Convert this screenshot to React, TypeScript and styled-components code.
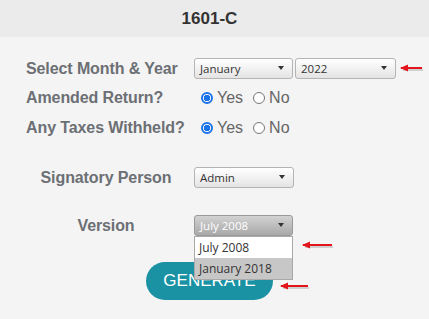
import React from "react";
import styled, { createGlobalStyle } from "styled-components";

const GlobalStyle = createGlobalStyle`
  html, body {
    margin: 0;
    padding: 0;
    background: #f4f4f4;
  }
  body {
    font-family: "Liberation Sans", Arial, sans-serif;
  }
`;

const Page = styled.div`
  width: 429px;
  height: 319px;
  overflow: hidden;
  background: #f4f4f4;
`;

const Header = styled.div`
  height: 37px;
  background: #ebebeb;
  display: flex;
  align-items: center;
  justify-content: center;
  padding-right: 10px;
  box-sizing: border-box;
`;

const Title = styled.h1`
  margin: 0;
  font-size: 17px;
  font-weight: bold;
  color: #333;
`;

const Body = styled.div`
  display: flex;
  flex-direction: column;
  padding: 17px 0 0 26px;
`;

const Row = styled.div<{ $gap?: number }>`
  display: grid;
  grid-template-columns: 168px auto;
  align-items: center;
  height: 29px;
  margin-top: ${(p) => p.$gap ?? 0}px;
`;

const Label = styled.div<{ $centered?: boolean }>`
  font-size: 16px;
  font-weight: bold;
  color: #6c6f74;
  white-space: nowrap;
  letter-spacing: -0.1px;
  text-align: ${(p) => (p.$centered ? "center" : "left")};
  padding-right: ${(p) => (p.$centered ? "8px" : "0")};
`;

const Controls = styled.div`
  display: flex;
  align-items: center;
  gap: 2px;
  position: relative;
`;

const SelectBox = styled.div<{ $width: number; $disabled?: boolean }>`
  position: relative;
  width: ${(p) => p.$width}px;
  height: 21px;
  box-sizing: border-box;
  border: 1px solid ${(p) => (p.$disabled ? "#9a9a9a" : "#b4b4b4")};
  border-radius: 3px;
  background: ${(p) =>
    p.$disabled
      ? "linear-gradient(#d2d2d2, #a9a9a9)"
      : "linear-gradient(#ffffff, #e4e4e4)"};
  color: ${(p) => (p.$disabled ? "#ffffff" : "#333")};
  font-family: "Open Sans", "Noto Sans", sans-serif;
  font-size: 11.5px;
  line-height: 19px;
  padding-left: 5px;

  &::after {
    content: "";
    position: absolute;
    right: 8px;
    top: 7px;
    border-left: 3.5px solid transparent;
    border-right: 3.5px solid transparent;
    border-top: 4px solid #333;
  }
`;

const RadioGroup = styled.div`
  display: flex;
  align-items: center;
  padding-left: 7px;
  font-size: 16px;
  color: #666;
`;

const RadioDot = styled.span<{ $checked?: boolean }>`
  width: 12px;
  height: 12px;
  box-sizing: border-box;
  border-radius: 50%;
  border: ${(p) => (p.$checked ? "2px solid #1a73e8" : "1px solid #767676")};
  background: ${(p) => (p.$checked ? "radial-gradient(circle, #1a73e8 0 3px, #fff 3.5px)" : "#fff")};
  margin-right: 4px;
`;

const RadioText = styled.span`
  margin-right: 10px;
  line-height: 1;
`;

const DropList = styled.div`
  position: absolute;
  left: 0;
  top: 21px;
  width: 99px;
  box-sizing: border-box;
  border: 1px solid #a9a9a9;
  background: #fff;
  font-family: "Open Sans", "Noto Sans", sans-serif;
  font-size: 12px;
  color: #333;
  z-index: 2;
`;

const Option = styled.div<{ $hover?: boolean }>`
  height: 21px;
  line-height: 21px;
  padding-left: 4px;
  background: ${(p) => (p.$hover ? "#c7c7c7" : "#fff")};
`;

const ArrowWrap = styled.span<{ $left: number; $top: number }>`
  position: absolute;
  left: ${(p) => p.$left}px;
  top: ${(p) => p.$top}px;
  display: block;
  line-height: 0;
`;

const ButtonRow = styled.div`
  display: flex;
  justify-content: center;
  margin-top: 22px;
  padding-right: 10px;
`;

const ButtonWrap = styled.div`
  position: relative;
`;

const GenerateButton = styled.button`
  width: 127px;
  height: 38px;
  border: none;
  border-radius: 19px;
  background: #1a92a3;
  color: #fff;
  font-family: "Liberation Sans", Arial, sans-serif;
  font-size: 17px;
  padding: 0;
  cursor: pointer;
`;

function RedArrow({ width }: { width: number }) {
  return (
    <svg width={width + 2} height="10" viewBox={`0 0 ${width + 2} 10`}>
      <path d={`M3 6 H${width + 1}`} stroke="#b9b9b9" strokeWidth="2" opacity="0.6" />
      <path d={`M1 4 H${width}`} stroke="#e3141b" strokeWidth="2" />
      <path d="M0 4 L8 0.5 L8 7.5 Z" fill="#e3141b" />
    </svg>
  );
}

function Radio({ checked, label }: { checked?: boolean; label: string }) {
  return (
    <>
      <RadioDot $checked={checked} />
      <RadioText>{label}</RadioText>
    </>
  );
}

export default function App() {
  return (
    <Page>
      <GlobalStyle />
      <Header>
        <Title>1601-C</Title>
      </Header>
      <Body>
        <Row>
          <Label>Select Month &amp; Year</Label>
          <Controls>
            <SelectBox $width={99}>January</SelectBox>
            <SelectBox $width={101}>2022</SelectBox>
            <ArrowWrap $left={206} $top={6}>
              <RedArrow width={22} />
            </ArrowWrap>
          </Controls>
        </Row>
        <Row>
          <Label>Amended Return?</Label>
          <RadioGroup>
            <Radio checked label="Yes" />
            <Radio label="No" />
          </RadioGroup>
        </Row>
        <Row $gap={1}>
          <Label>Any Taxes Withheld?</Label>
          <RadioGroup>
            <Radio checked label="Yes" />
            <Radio label="No" />
          </RadioGroup>
        </Row>
        <Row $gap={21}>
          <Label $centered>Signatory Person</Label>
          <Controls>
            <SelectBox $width={100}>Admin</SelectBox>
          </Controls>
        </Row>
        <Row $gap={19}>
          <Label $centered>Version</Label>
          <Controls>
            <SelectBox $width={99} $disabled>
              July 2008
            </SelectBox>
            <DropList>
              <Option>July 2008</Option>
              <Option $hover>January 2018</Option>
            </DropList>
            <ArrowWrap $left={108} $top={26}>
              <RedArrow width={30} />
            </ArrowWrap>
          </Controls>
        </Row>
      </Body>
      <ButtonRow>
        <ButtonWrap>
          <GenerateButton>GENERATE</GenerateButton>
          <ArrowWrap $left={134} $top={20}>
            <RedArrow width={28} />
          </ArrowWrap>
        </ButtonWrap>
      </ButtonRow>
    </Page>
  );
}
